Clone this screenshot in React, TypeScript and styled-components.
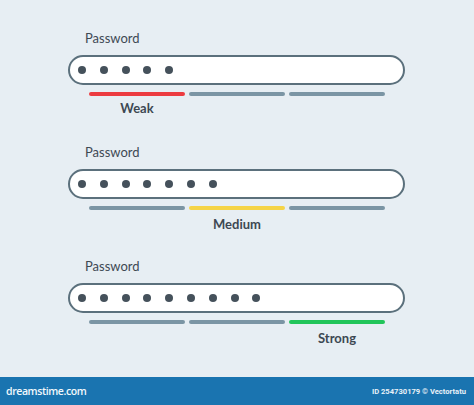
import React from "react";
import styled, { createGlobalStyle } from "styled-components";

const GlobalStyle = createGlobalStyle`
  html, body {
    margin: 0;
    padding: 0;
    background: #e7eef3;
  }
  * { box-sizing: border-box; }
`;

const Page = styled.div`
  width: 474px;
  height: 405px;
  display: flex;
  flex-direction: column;
  font-family: Lato, "Open Sans", sans-serif;
  overflow: hidden;
`;

const Main = styled.main`
  flex: 1;
  background: #e7eef3;
  padding: 30px 69px 0 68px;
  display: flex;
  flex-direction: column;
  gap: 26px;
`;

const Field = styled.section`
  display: flex;
  flex-direction: column;
`;

const Label = styled.div`
  font-size: 13px;
  line-height: 16px;
  color: #3e4953;
  margin: 0 0 9px 17px;
`;

const InputBox = styled.div`
  height: 30px;
  border: 2px solid #5b707c;
  border-radius: 15px;
  background: #ffffff;
  display: flex;
  align-items: center;
  gap: 13.8px;
  padding-left: 8px;
`;

const Dot = styled.span`
  width: 8px;
  height: 8px;
  border-radius: 50%;
  background: #45515b;
  flex: none;
`;

const Meter = styled.div`
  display: grid;
  grid-template-columns: repeat(3, 96px);
  column-gap: 4px;
  margin-left: 21px;
`;

const Bar = styled.div<{ $color: string }>`
  height: 4px;
  border-radius: 2px;
  background: ${(p) => p.$color};
  margin-top: 7px;
`;

/* the caption sits a little higher under the first segment */
const Strength = styled.div<{ $col: number }>`
  grid-column: ${(p) => p.$col};
  text-align: center;
  font-size: 13px;
  line-height: 16px;
  font-weight: 700;
  color: #3d4852;
  margin-top: ${(p) => (p.$col === 1 ? 4 : 6)}px;
  margin-bottom: ${(p) => (p.$col === 1 ? 2 : 0)}px;
`;

const Footer = styled.footer`
  height: 28px;
  flex: none;
  background: #1a74b0;
  display: flex;
  align-items: center;
  justify-content: space-between;
  padding: 0 8px 0 6px;
  color: #ffffff;
`;

const Brand = styled.span`
  font-family: "Open Sans", sans-serif;
  font-weight: 600;
  font-size: 10.5px;
  letter-spacing: -0.4px;
  color: #f2f8fc;
`;

const Credit = styled.span`
  font-family: Roboto, "Liberation Sans", sans-serif;
  font-weight: 700;
  font-size: 7.6px;
  color: #e8f1f8;
`;

const GREY = "#7b95a4";

type Level = { label: string; dots: number; active: number; color: string };

const levels: Level[] = [
  { label: "Weak", dots: 5, active: 1, color: "#ec3b40" },
  { label: "Medium", dots: 7, active: 2, color: "#f5d447" },
  { label: "Strong", dots: 9, active: 3, color: "#22c55a" },
];

function PasswordField({ level }: { level: Level }) {
  return (
    <Field>
      <Label>Password</Label>
      <InputBox>
        {Array.from({ length: level.dots }, (_, i) => (
          <Dot key={i} />
        ))}
      </InputBox>
      <Meter>
        {[1, 2, 3].map((n) => (
          <Bar key={n} $color={n === level.active ? level.color : GREY} />
        ))}
        <Strength $col={level.active}>{level.label}</Strength>
      </Meter>
    </Field>
  );
}

export default function App() {
  return (
    <Page>
      <GlobalStyle />
      <Main>
        {levels.map((l) => (
          <PasswordField key={l.label} level={l} />
        ))}
      </Main>
      <Footer>
        <Brand>dreamstime.com</Brand>
        <Credit>ID 254730179 © Vectortatu</Credit>
      </Footer>
    </Page>
  );
}
